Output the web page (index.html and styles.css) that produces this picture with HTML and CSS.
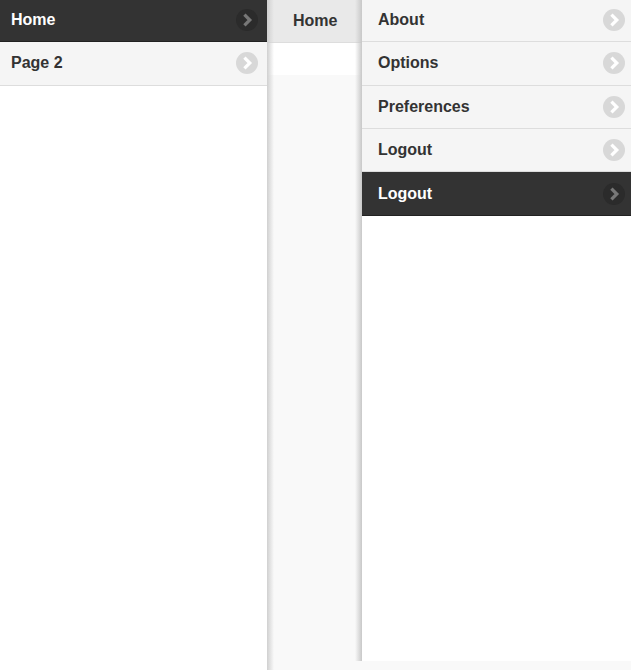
FILE: index.html
```html
<!DOCTYPE html>
<html lang="en">
<head>
    <meta charset="UTF-8">
    <meta name="viewport" content="width=device-width, initial-scale=1.0">
    <title>Menu</title>
    <link rel="stylesheet" href="styles.css">
</head>
<body>
    <svg class="icon-defs" width="0" height="0" aria-hidden="true">
        <symbol id="arrow" viewBox="0 0 22 22">
            <circle class="arrow-disc" cx="11" cy="11" r="11"/>
            <path class="arrow-mark" d="M8.4 5.6 L13.8 11 L8.4 16.4" fill="none" stroke-width="3.2"/>
        </symbol>
    </svg>

    <div class="panels">
        <nav class="panel panel-left">
            <a class="item active" href="#">Home<svg class="arrow"><use href="#arrow"/></svg></a>
            <a class="item" href="#">Page 2<svg class="arrow"><use href="#arrow"/></svg></a>
        </nav>

        <div class="panel panel-middle">
            <div class="tab">Home</div>
            <div class="tab-body"></div>
        </div>

        <nav class="panel panel-right">
            <a class="item" href="#">About<svg class="arrow"><use href="#arrow"/></svg></a>
            <a class="item" href="#">Options<svg class="arrow"><use href="#arrow"/></svg></a>
            <a class="item" href="#">Preferences<svg class="arrow"><use href="#arrow"/></svg></a>
            <a class="item" href="#">Logout<svg class="arrow"><use href="#arrow"/></svg></a>
            <a class="item active" href="#">Logout<svg class="arrow"><use href="#arrow"/></svg></a>
        </nav>
    </div>
</body>
</html>
```

FILE: styles.css
```css
html, body {
    margin: 0;
    padding: 0;
    height: 100%;
    overflow: hidden;
}

body {
    font-family: 'Liberation Sans', Arial, sans-serif;
    font-size: 16px;
    font-weight: bold;
    color: #333;
    background-color: #f9f9f9;
}

.icon-defs {
    display: block;
    height: 0;
}

.panels {
    display: flex;
    height: 670px;
}

.panel-left {
    width: 267px;
    flex: none;
    background-color: #fff;
}

.panel-middle {
    position: relative;
    width: 95px;
    flex: none;
    background-color: #f9f9f9;
}

/* panel edge shadows, laid over the tab and its body */
.panel-middle::before,
.panel-middle::after {
    content: "";
    position: absolute;
    top: 0;
    width: 7px;
}

.panel-middle::before {
    left: 0;
    bottom: 0;
    background: linear-gradient(to right, #d0d0d0, rgba(220, 220, 220, 0));
}

.panel-middle::after {
    right: 0;
    height: 661px;
    background: linear-gradient(to left, #c8c8c8, rgba(220, 220, 220, 0));
}

.panel-right {
    width: 269px;
    height: 661px;
    flex: none;
    background-color: #fff;
}

.panel-left .item:first-child,
.panel-right .item:first-child {
    margin-top: -1.2px;
}

.item {
    display: flex;
    align-items: center;
    justify-content: space-between;
    height: 43.4px;
    box-sizing: border-box;
    padding: 0 6px 0 16px;
    color: #333;
    text-decoration: none;
    background-color: #f5f5f5;
    border-bottom: 1px solid #ddd;
    --disc: #d8d8d8;
    --mark: #fff;
}

.panel-left .item {
    padding-left: 11px;
    padding-right: 9px;
}

.item.active {
    color: #fff;
    background-color: #333;
    border-bottom-color: #222;
    --disc: #2b2b2b;
    --mark: #777;
}

.arrow {
    width: 22px;
    height: 22px;
    flex: none;
}

.arrow-disc {
    fill: var(--disc);
}

.arrow-mark {
    stroke: var(--mark);
}

.tab {
    height: 43px;
    box-sizing: border-box;
    padding-left: 26px;
    line-height: 41px;
    background-color: #e9e9e9;
    border-bottom: 1px solid #ddd;
}

.tab-body {
    height: 32px;
    background-color: #fff;
}
```
